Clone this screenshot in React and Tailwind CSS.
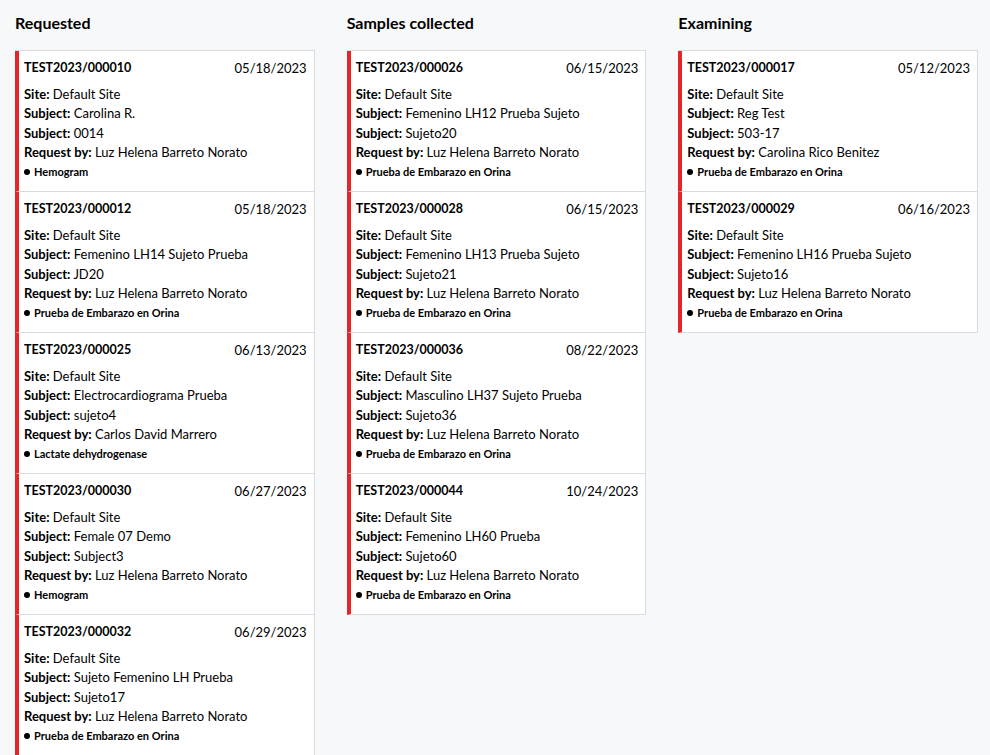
import React from "react";

const columns = [
  {
    title: "Requested",
    cards: [
      { id: "TEST2023/000010", date: "05/18/2023", site: "Default Site", s1: "Carolina R.", s2: "0014", by: "Luz Helena Barreto Norato", test: "Hemogram" },
      { id: "TEST2023/000012", date: "05/18/2023", site: "Default Site", s1: "Femenino LH14 Sujeto Prueba", s2: "JD20", by: "Luz Helena Barreto Norato", test: "Prueba de Embarazo en Orina" },
      { id: "TEST2023/000025", date: "06/13/2023", site: "Default Site", s1: "Electrocardiograma Prueba", s2: "sujeto4", by: "Carlos David Marrero", test: "Lactate dehydrogenase" },
      { id: "TEST2023/000030", date: "06/27/2023", site: "Default Site", s1: "Female 07 Demo", s2: "Subject3", by: "Luz Helena Barreto Norato", test: "Hemogram" },
      { id: "TEST2023/000032", date: "06/29/2023", site: "Default Site", s1: "Sujeto Femenino LH Prueba", s2: "Sujeto17", by: "Luz Helena Barreto Norato", test: "Prueba de Embarazo en Orina" },
    ],
  },
  {
    title: "Samples collected",
    cards: [
      { id: "TEST2023/000026", date: "06/15/2023", site: "Default Site", s1: "Femenino LH12 Prueba Sujeto", s2: "Sujeto20", by: "Luz Helena Barreto Norato", test: "Prueba de Embarazo en Orina" },
      { id: "TEST2023/000028", date: "06/15/2023", site: "Default Site", s1: "Femenino LH13 Prueba Sujeto", s2: "Sujeto21", by: "Luz Helena Barreto Norato", test: "Prueba de Embarazo en Orina" },
      { id: "TEST2023/000036", date: "08/22/2023", site: "Default Site", s1: "Masculino LH37 Sujeto Prueba", s2: "Sujeto36", by: "Luz Helena Barreto Norato", test: "Prueba de Embarazo en Orina" },
      { id: "TEST2023/000044", date: "10/24/2023", site: "Default Site", s1: "Femenino LH60 Prueba", s2: "Sujeto60", by: "Luz Helena Barreto Norato", test: "Prueba de Embarazo en Orina" },
    ],
  },
  {
    title: "Examining",
    cards: [
      { id: "TEST2023/000017", date: "05/12/2023", site: "Default Site", s1: "Reg Test", s2: "503-17", by: "Carolina Rico Benitez", test: "Prueba de Embarazo en Orina" },
      { id: "TEST2023/000029", date: "06/16/2023", site: "Default Site", s1: "Femenino LH16 Prueba Sujeto", s2: "Sujeto16", by: "Luz Helena Barreto Norato", test: "Prueba de Embarazo en Orina" },
    ],
  },
];

function Card({ c }) {
  return (
    <div className="bg-white border-l-4 border-l-[#e4262b] border-r border-b border-r-[#d8dce1] border-b-[#d8dce1] pl-[5px] pr-[7px] pt-[8px] h-[141px]">
      <div className="flex justify-between items-start">
        <span className="text-[12.5px] font-bold leading-[18px]">{c.id}</span>
        <span className="text-[13px] leading-[18px]">{c.date}</span>
      </div>
      <div className="mt-[8px] text-[13px] leading-[19.3px]">
        <div><span className="font-bold">Site:</span> {c.site}</div>
        <div><span className="font-bold">Subject:</span> {c.s1}</div>
        <div><span className="font-bold">Subject:</span> {c.s2}</div>
        <div><span className="font-bold">Request by:</span> {c.by}</div>
      </div>
      <div className="text-[11px] font-bold leading-[20px] flex items-center">
        <span className="inline-block w-[6px] h-[6px] rounded-full bg-black mr-[4px]"></span>
        {c.test}
      </div>
    </div>
  );
}

export default function App() {
  return (
    <div className="min-h-[755px] bg-[#f7f8fa] text-black pl-[15px] pr-[12px] pt-[12px]" style={{ fontFamily: 'Lato, "Noto Sans", sans-serif' }}>
      <div className="grid grid-cols-3 gap-[32px]">
        {columns.map((col) => (
          <div key={col.title}>
            <h2 className="text-[16px] font-bold leading-[22px] mb-[16px]">{col.title}</h2>
            <div className="border-t border-t-[#d8dce1]">
              {col.cards.map((c) => (
                <Card key={c.id} c={c} />
              ))}
            </div>
          </div>
        ))}
      </div>
    </div>
  );
}
